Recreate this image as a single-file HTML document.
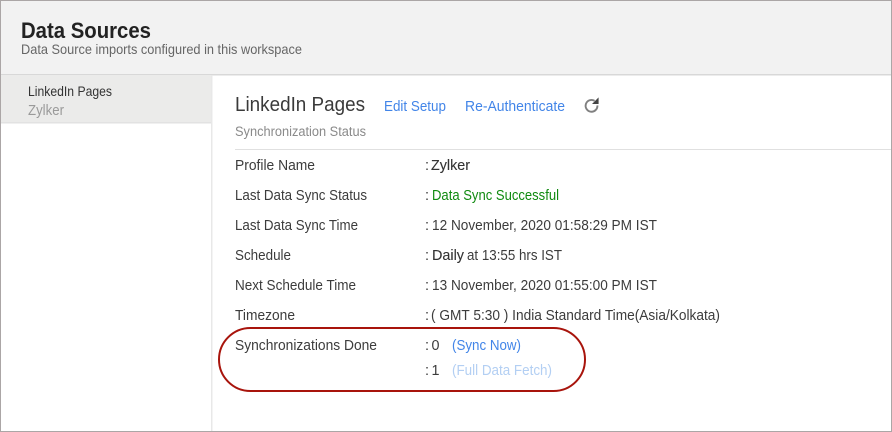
<!DOCTYPE html>
<html>
<head>
<meta charset="utf-8">
<style>
html,body{margin:0;padding:0;width:892px;height:432px;overflow:hidden;background:#fff}
svg{display:block}
text{font-family:"Liberation Sans",sans-serif;font-size:14.5px;fill:#3c3c3c}
.b{stroke:#333;stroke-width:.12px}
</style>
</head>
<body>
<svg width="892" height="432" viewBox="0 0 892 432" xmlns="http://www.w3.org/2000/svg">
<rect x="0" y="0" width="892" height="432" fill="#fff"/>
<rect x="0" y="0" width="892" height="74" fill="#f2f2f2"/>
<rect x="0" y="74" width="892" height="1.5" fill="#d8d8d8"/>
<rect x="0" y="75" width="212" height="47" fill="#ebebea"/>
<rect x="0" y="122" width="212" height="1.5" fill="#e2e2e2"/>
<rect x="211" y="75" width="1.5" height="357" fill="#e8e8e8"/>
<rect x="235" y="149" width="657" height="1" fill="#e0e0e0"/>
<rect x="0" y="0" width="892" height="1" fill="#aba6a6"/>
<rect x="0" y="0" width="1" height="432" fill="#aba6a6"/>
<rect x="891" y="0" width="1" height="432" fill="#aba6a6"/>
<rect x="0" y="431" width="892" height="1" fill="#aba6a6"/>

<text x="21" y="38" font-weight="700" style="font-size:22px;fill:#222" textLength="130" lengthAdjust="spacingAndGlyphs">Data Sources</text>
<text x="21" y="54" style="font-size:14px;fill:#666" textLength="281" lengthAdjust="spacingAndGlyphs">Data Source imports configured in this workspace</text>
<text x="28" y="96" style="font-size:14px;fill:#333" textLength="84" lengthAdjust="spacingAndGlyphs">LinkedIn Pages</text>
<text x="28" y="115" style="font-size:14.5px;fill:#9a9a9a" textLength="36" lengthAdjust="spacingAndGlyphs">Zylker</text>

<text x="235" y="111" style="font-size:20.5px;fill:#3a3a3a" textLength="130" lengthAdjust="spacingAndGlyphs">LinkedIn Pages</text>
<text x="384" y="111" style="font-size:14.5px;fill:#4285e8" textLength="62" lengthAdjust="spacingAndGlyphs">Edit Setup</text>
<text x="465" y="111" style="font-size:14.5px;fill:#4285e8" textLength="100" lengthAdjust="spacingAndGlyphs">Re-Authenticate</text>
<path d="M594.6 100.8A5.9 5.9 0 1 0 597.4 105.4" fill="none" stroke="#808080" stroke-width="1.9"/>
<path d="M598.6 97.4V104H592Z" fill="#444"/>
<text x="235" y="136" style="font-size:13.5px;fill:#8a8a8a" textLength="131" lengthAdjust="spacingAndGlyphs">Synchronization Status</text>

<text x="235" y="170" textLength="80" lengthAdjust="spacingAndGlyphs">Profile Name</text>
<text x="235" y="200" textLength="132" lengthAdjust="spacingAndGlyphs">Last Data Sync Status</text>
<text x="235" y="230" textLength="123" lengthAdjust="spacingAndGlyphs">Last Data Sync Time</text>
<text x="235" y="260" textLength="56" lengthAdjust="spacingAndGlyphs">Schedule</text>
<text x="235" y="290" textLength="121" lengthAdjust="spacingAndGlyphs">Next Schedule Time</text>
<text x="235" y="320" textLength="60" lengthAdjust="spacingAndGlyphs">Timezone</text>
<text x="235" y="350" textLength="142" lengthAdjust="spacingAndGlyphs">Synchronizations Done</text>

<text x="425" y="170">:</text><text x="431" y="170" textLength="39" lengthAdjust="spacingAndGlyphs" class="b" style="fill:#333">Zylker</text>
<text x="425" y="200">:</text><text x="432" y="200" textLength="127" lengthAdjust="spacingAndGlyphs" style="fill:#108a10">Data Sync Successful</text>
<text x="425" y="230">:</text><text x="432" y="230" textLength="225" lengthAdjust="spacingAndGlyphs">12 November, 2020 01:58:29 PM IST</text>
<text x="425" y="260">:</text><text x="432" y="260" textLength="32" lengthAdjust="spacingAndGlyphs" class="b" style="fill:#333">Daily</text><text x="467" y="260" textLength="95" lengthAdjust="spacingAndGlyphs">at 13:55 hrs IST</text>
<text x="425" y="290">:</text><text x="432" y="290" textLength="225" lengthAdjust="spacingAndGlyphs">13 November, 2020 01:55:00 PM IST</text>
<text x="425" y="320">:</text><text x="431" y="320" textLength="289" lengthAdjust="spacingAndGlyphs">( GMT 5:30 ) India Standard Time(Asia/Kolkata)</text>
<text x="425" y="350">:</text><text x="431.5" y="350" textLength="8" lengthAdjust="spacingAndGlyphs">0</text>
<text x="452" y="350" textLength="69" lengthAdjust="spacingAndGlyphs" style="fill:#4285e8">(Sync Now)</text>
<text x="425" y="375">:</text><text x="431.5" y="375" textLength="8" lengthAdjust="spacingAndGlyphs">1</text>
<text x="452" y="375" textLength="100" lengthAdjust="spacingAndGlyphs" style="fill:#b3cff3">(Full Data Fetch)</text>

<rect x="219" y="328" width="366" height="63" rx="31.5" ry="31.5" fill="none" stroke="#a8140c" stroke-width="2"/>
</svg>
</body>
</html>
